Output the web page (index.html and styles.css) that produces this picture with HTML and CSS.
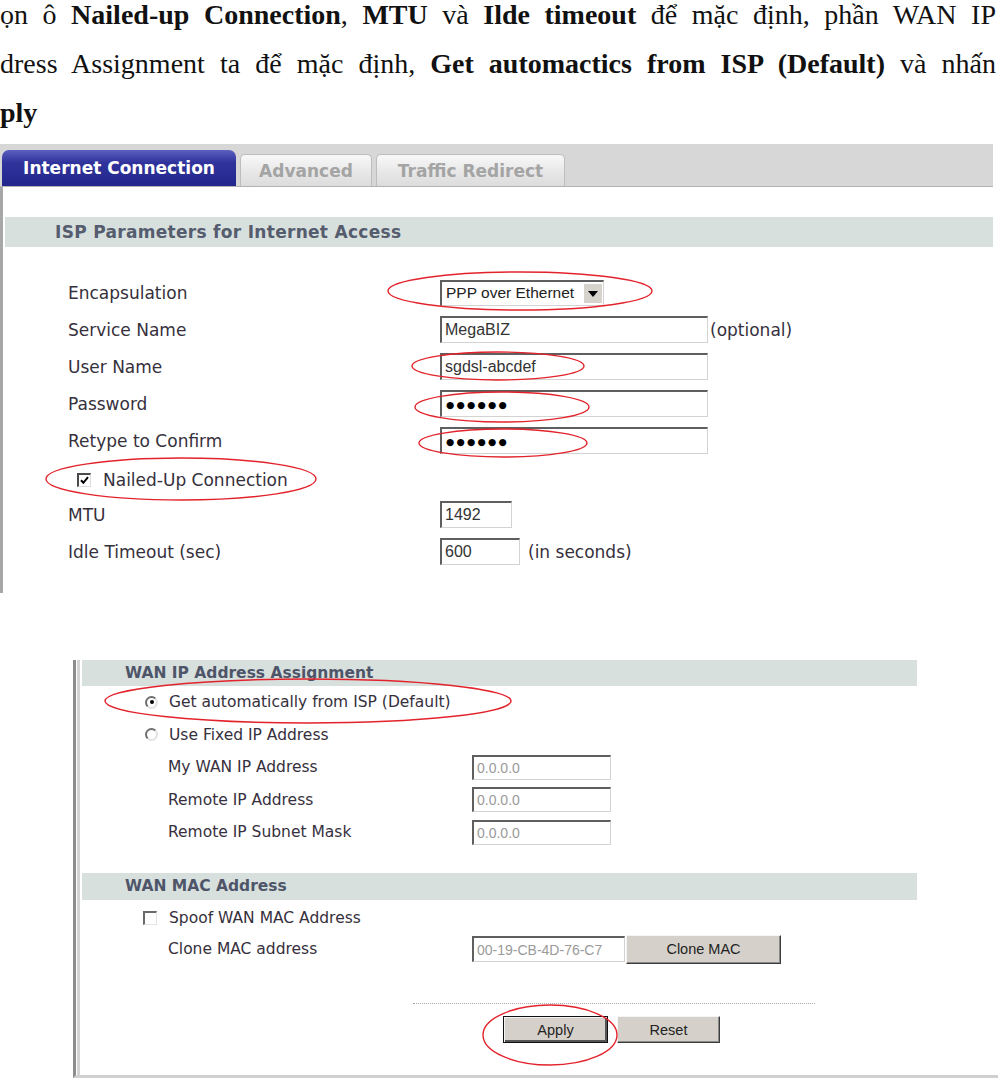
FILE: index.html
```html
<!DOCTYPE html>
<html lang="vi">
<head>
<meta charset="utf-8">
<title>Internet Connection</title>
<link rel="stylesheet" href="styles.css">
</head>
<body>
<div class="page">
  <div class="intro">
    <p class="line l1">ọn ô <b>Nailed-up Connection</b>, <b>MTU</b> và <b>Ilde timeout</b> để mặc định, phần WAN IP</p>
    <p class="line l2">dress Assignment ta để mặc định, <b>Get automactics from ISP (Default)</b> và nhấn</p>
    <p class="line l3"><b>ply</b></p>
  </div>

  <div class="shot1">
    <div class="tabbar">
      <div class="tab active">Internet Connection</div>
      <div class="tab t-adv">Advanced</div>
      <div class="tab t-trf">Traffic Redirect</div>
    </div>
    <div class="body1">
      <div class="band band1">ISP Parameters for Internet Access</div>
      <div class="form1">
        <div class="row"><div class="lbl">Encapsulation</div><div class="ctl"><div class="select"><span class="sel-text">PPP over Ethernet</span><span class="sel-btn"><span class="tri"></span></span></div></div></div>
        <div class="row"><div class="lbl">Service Name</div><div class="ctl"><div class="field w268">MegaBIZ</div><span class="note">(optional)</span></div></div>
        <div class="row"><div class="lbl">User Name</div><div class="ctl"><div class="field w268">sgdsl-abcdef</div></div></div>
        <div class="row"><div class="lbl">Password</div><div class="ctl"><div class="field w268 pw">●●●●●●</div></div></div>
        <div class="row"><div class="lbl">Retype to Confirm</div><div class="ctl"><div class="field w268 pw">●●●●●●</div></div></div>
        <div class="row row-chk"><div class="lbl chk-lbl"><span class="cb"><svg width="9" height="9" viewBox="0 0 9 9"><path d="M1 4.2 L3.4 6.8 L8 1.2" fill="none" stroke="#000" stroke-width="2"/></svg></span>Nailed-Up Connection</div><div class="ctl"></div></div>
        <div class="row"><div class="lbl">MTU</div><div class="ctl"><div class="field w72">1492</div></div></div>
        <div class="row"><div class="lbl">Idle Timeout (sec)</div><div class="ctl"><div class="field w80">600</div><span class="note sec">(in seconds)</span></div></div>
      </div>
    </div>
  </div>

  <div class="shot2">
    <div class="inner2">
      <div class="band band2">WAN IP Address Assignment</div>
      <div class="rows2">
        <div class="row2"><div class="opt"><span class="radio on"></span>Get automatically from ISP (Default)</div></div>
        <div class="row2"><div class="opt"><span class="radio"></span>Use Fixed IP Address</div></div>
        <div class="row2"><div class="sub">My WAN IP Address</div><div class="field dis w139">0.0.0.0</div></div>
        <div class="row2"><div class="sub">Remote IP Address</div><div class="field dis w139">0.0.0.0</div></div>
        <div class="row2"><div class="sub">Remote IP Subnet Mask</div><div class="field dis w139">0.0.0.0</div></div>
      </div>
      <div class="band band2 band2b">WAN MAC Address</div>
      <div class="row2 spoof"><div class="opt opt-cb"><span class="cb empty"></span>Spoof WAN MAC Address</div></div>
      <div class="row2 clone"><div class="sub">Clone MAC address</div><div class="macwrap"><div class="field dis w153">00-19-CB-4D-76-C7</div><div class="btn clonebtn">Clone MAC</div></div></div>
      <div class="footer">
        <div class="btns"><div class="btn apply">Apply</div><div class="btn reset">Reset</div></div>
      </div>
    </div>
  </div>

  <svg class="marks" width="998" height="1080" viewBox="0 0 998 1080">
    <g fill="none" stroke="#e3232b" stroke-width="1.4">
      <ellipse cx="520" cy="291" rx="132" ry="19"/>
      <ellipse cx="498" cy="366" rx="86" ry="14"/>
      <ellipse cx="502" cy="407" rx="87" ry="15"/>
      <ellipse cx="503" cy="443" rx="84" ry="14"/>
      <ellipse cx="181" cy="479" rx="135" ry="21"/>
      <ellipse cx="308" cy="701" rx="203" ry="22"/>
      <ellipse cx="550" cy="1035" rx="67" ry="30"/>
    </g>
  </svg>
</div>
</body>
</html>
```

FILE: styles.css
```css
html, body {
  margin: 0;
  padding: 0;
  background: #fff;
  overflow: hidden;
}

.page {
  position: relative;
  width: 998px;
  height: 1080px;
  overflow: hidden;
}

/* ---------- intro text ---------- */
.intro {
  font-family: "Liberation Serif", "Times New Roman", serif;
  font-size: 28px;
  color: #111;
  margin-top: -10px;
}
.line {
  margin: 0;
  line-height: 49px;
  white-space: nowrap;
  text-align: justify;
  text-align-last: justify;
}
.l1 { width: 996px; }
.l2 { width: 996px; }
.l3 { text-align: left; text-align-last: left; }

/* ---------- first screenshot ---------- */
.shot1 {
  width: 993px;
  margin-top: 7px;
  font-family: "DejaVu Sans", Verdana, sans-serif;
}
.tabbar {
  height: 43px;
  box-sizing: border-box;
  background: #d7d7d7;
  border-bottom: 1px solid #b3b3b3;
  display: flex;
  align-items: flex-end;
  gap: 4px;
  padding-left: 2px;
}
.tab {
  height: 32px;
  box-sizing: border-box;
  display: flex;
  align-items: center;
  justify-content: center;
  font-weight: bold;
  font-size: 17px;
  color: #a4a4a4;
  background: linear-gradient(#f8f8f8, #e6e6e6 60%, #dcdcdc);
  border: 1px solid #bdbdbd;
  border-bottom: none;
  border-radius: 5px 5px 0 0;
}
.tab.active {
  width: 234px;
  height: 36px;
  color: #fff;
  border: none;
  border-radius: 7px 7px 0 0;
  background: linear-gradient(#5a5fc0, #2f339b 35%, #23278c);
}
.t-adv { width: 132px; }
.t-trf { width: 189px; }

.body1 {
  height: 406px;
  box-sizing: border-box;
  border-left: 3px solid #a7a7a7;
  padding-top: 30px;
}
.band {
  background: #d8e0de;
  font-weight: bold;
  color: #545c6e;
}
.band1 {
  margin-left: 2px;
  height: 30px;
  line-height: 30px;
  padding-left: 50px;
  font-size: 17px;
  letter-spacing: 0.3px;
}
.form1 {
  padding-top: 27px;
}
.row {
  display: grid;
  grid-template-columns: 437px auto;
  align-items: center;
  height: 37px;
  color: #36303c;
  font-size: 17px;
}
.row-chk .lbl {
  padding-top: 4px;
}
.lbl {
  padding-left: 65px;
}
.chk-lbl {
  display: flex;
  align-items: center;
}
.ctl {
  display: flex;
  align-items: center;
}
.note {
  margin-left: 2px;
}
.note.sec {
  margin-left: 8px;
}

/* fields */
.field {
  box-sizing: border-box;
  height: 27px;
  border-style: solid;
  border-width: 2px 1px 1px 2px;
  border-color: #5f5f5f #d3d3d3 #d3d3d3 #5f5f5f;
  background: #fff;
  font-family: "Liberation Sans", Arial, sans-serif;
  font-size: 16px;
  color: #333;
  padding-left: 3px;
  display: flex;
  align-items: center;
  white-space: nowrap;
  overflow: hidden;
}
.w268 { width: 268px; }
.w72 { width: 72px; }
.w80 { width: 80px; }
.w139 { width: 139px; height: 25px; }
.w153 { width: 153px; height: 26px; }
.pw {
  font-family: "DejaVu Sans", sans-serif;
  font-size: 9.5px;
  color: #000;
  letter-spacing: 2.2px;
  padding-left: 4px;
}
.field.dis {
  color: #9a9a9a;
  font-size: 14px;
}

.select {
  box-sizing: border-box;
  width: 164px;
  height: 26px;
  border-style: solid;
  border-width: 2px 1px 1px 2px;
  border-color: #5f5f5f #d3d3d3 #d3d3d3 #5f5f5f;
  display: flex;
  align-items: center;
  font-family: "Liberation Sans", Arial, sans-serif;
  font-size: 15.5px;
  color: #222;
}
.sel-text {
  flex: 1;
  padding-left: 4px;
  white-space: nowrap;
}
.sel-btn {
  width: 19px;
  height: 20px;
  margin-right: 1px;
  background: #d6d3cc;
  border-left: 1px solid #fff;
  border-top: 1px solid #fff;
  box-sizing: border-box;
  display: flex;
  align-items: center;
  justify-content: center;
}
.tri {
  width: 0;
  height: 0;
  border-left: 5px solid transparent;
  border-right: 5px solid transparent;
  border-top: 6px solid #000;
}

/* checkbox + radio */
.cb {
  width: 14px;
  height: 14px;
  box-sizing: border-box;
  border-style: solid;
  border-width: 2px 1px 1px 2px;
  border-color: #4a4a4a #dcdcdc #dcdcdc #4a4a4a;
  background: #fff;
  display: inline-flex;
  align-items: center;
  justify-content: center;
  margin-left: 9px;
  margin-right: 12px;
  flex: none;
}
.cb.empty {
  margin-left: 0;
  margin-right: 12px;
  border-color: #6a6a6a #e4e4e4 #e4e4e4 #6a6a6a;
}
.radio {
  width: 13px;
  height: 13px;
  box-sizing: border-box;
  border-radius: 50%;
  border: 2px solid;
  border-color: #6d6d6d #e2e2e2 #e2e2e2 #6d6d6d;
  background: #fff;
  margin-right: 11px;
  flex: none;
  display: inline-flex;
  align-items: center;
  justify-content: center;
}
.radio.on::after {
  content: "";
  width: 4px;
  height: 4px;
  border-radius: 50%;
  background: #000;
}

/* ---------- second screenshot ---------- */
.shot2 {
  margin-top: 67px;
  margin-left: 73px;
  height: 415px;
  border-left: 3px solid #8d8d8d;
  border-bottom: 3px solid #d0d0d0;
  font-family: "DejaVu Sans", Verdana, sans-serif;
}
.inner2 {
  height: 100%;
  margin-left: 1px;
  border-left: 3px solid #d3d3d3;
}
.band2 {
  margin-left: 2px;
  width: 835px;
  height: 26px;
  line-height: 26px;
  box-sizing: border-box;
  padding-left: 43px;
  font-size: 15.5px;
  color: #4e5569;
}
.band2b {
  margin-top: 24.5px;
  height: 27px;
  line-height: 27px;
}
.row2 {
  margin-left: 2px;
  display: grid;
  grid-template-columns: 390px auto;
  align-items: center;
  height: 32.5px;
  font-size: 15.5px;
  color: #36303c;
}
.opt {
  grid-column: 1 / 3;
  padding-left: 63px;
  display: flex;
  align-items: center;
}
.opt-cb {
  padding-left: 61px;
}
.sub {
  padding-left: 86px;
}
.spoof {
  margin-top: 2px;
  height: 32px;
}
.clone {
  height: 30px;
}
.macwrap {
  display: flex;
  align-items: center;
}

.btn {
  box-sizing: border-box;
  background: #d5d1ca;
  border: 1px solid;
  border-color: #f4f4f4 #3c3c3c #3c3c3c #f4f4f4;
  box-shadow: inset -1px -1px 0 #8a8a8a;
  font-family: "Liberation Sans", Arial, sans-serif;
  font-size: 14.5px;
  color: #222;
  display: flex;
  align-items: center;
  justify-content: center;
}
.clonebtn {
  width: 155px;
  height: 29px;
  margin-left: 1px;
}
.footer {
  margin-top: 39px;
  margin-left: 333px;
  width: 402px;
  border-top: 1px dotted #a9a9a9;
}
.btns {
  display: flex;
  gap: 9px;
  padding-top: 12px;
  padding-left: 90px;
}
.apply, .reset {
  height: 27px;
}
.apply {
  width: 105px;
  border: 1px solid #111;
  box-shadow: inset 1px 1px 0 #f4f4f4, inset -2px -2px 0 #555;
}
.reset {
  width: 103px;
}

/* ---------- annotations ---------- */
.marks {
  position: absolute;
  left: 0;
  top: 0;
  pointer-events: none;
}
```
